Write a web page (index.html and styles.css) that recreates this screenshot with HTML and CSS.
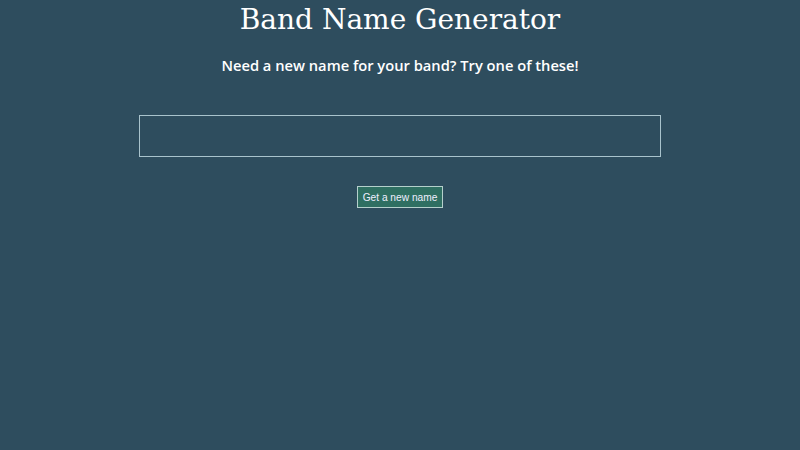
FILE: index.html
```html
<!DOCTYPE html>
<html lang="en">
<head>
  <meta charset="UTF-8">
  <title>Band Name Generator</title>
  <link rel="stylesheet" href="styles.css">
</head>
<body>

<h1>Band Name Generator</h1>
<h2>Need a new name for your band? Try one of these!</h2>

<div class="name-box" id="bandName"></div>

<div class="actions">
  <button id="newName">Get a new name</button>
</div>

</body>
</html>
```
FILE: styles.css
```css
body {
  margin: 0;
  background: #2e4d5e;
  color: #fff;
  font-family: "Open Sans", sans-serif;
}
h1 {
  font-family: "DejaVu Serif", serif;
  font-weight: normal;
  font-size: 28px;
  text-align: center;
  margin: 2px 0 0;
  line-height: 36px;
}
h2 {
  font-size: 14.7px;
  font-weight: 600;
  text-align: center;
  margin: 17px 0 0;
  line-height: 20px;
}
.name-box {
  width: 520px;
  height: 40px;
  margin: 40px auto 0;
  border: 1px solid #a9c3cc;
}
.actions {
  text-align: center;
  margin-top: 29px;
}
button {
  font-family: "Liberation Sans", Arial, sans-serif;
  font-size: 10.2px;
  color: #eef;
  background: #2f6f62;
  border: 1px solid #b5d0cc;
  padding: 0 5px;
  height: 22px;
  vertical-align: top;
}
```
